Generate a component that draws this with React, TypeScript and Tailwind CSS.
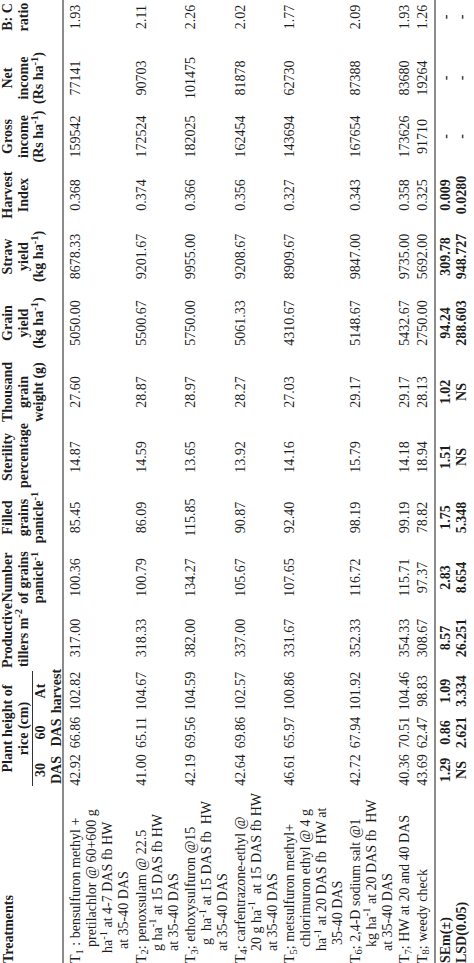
import React from 'react';

// column widths after the treatment column (30 DAS, 60 DAS, harvest, tillers ... B:C)
const W = [
  'w-[38px]',
  'w-[37px]',
  'w-[46px]',
  'w-[60px]',
  'w-[61px]',
  'w-[59px]',
  'w-[62px]',
  'w-[68px]',
  'w-[70px]',
  'w-[63px]',
  'w-[60px]',
  'w-[57px]',
  'w-[60px]',
  'w-[62px]',
];

const Ha = () => (
  <>
    ha<sup>-1</sup>
  </>
);

type Row = {
  t: string;
  sep: string;
  lines: React.ReactNode[];
  vals: string[];
};

const rows: Row[] = [
  {
    t: '1',
    sep: ' : ',
    lines: [
      'bensulfuron methyl +',
      <span className="pl-[16px]">pretilachlor @ 60+600 g</span>,
      <span className="pl-[10px]"><Ha /> at 4-7 DAS fb HW</span>,
      <span className="pl-[14px]">at 35-40 DAS</span>,
    ],
    vals: ['42.92', '66.86', '102.82', '317.00', '100.36', '85.45', '14.87', '27.60', '5050.00', '8678.33', '0.368', '159542', '77141', '1.93'],
  },
  {
    t: '2',
    sep: ': ',
    lines: [
      'penoxsulam @ 22.5',
      <span className="pl-[12px]">g <Ha /> at 15 DAS fb HW</span>,
      <span className="pl-[12px]">at 35-40 DAS</span>,
    ],
    vals: ['41.00', '65.11', '104.67', '318.33', '100.79', '86.09', '14.59', '28.87', '5500.67', '9201.67', '0.374', '172524', '90703', '2.11'],
  },
  {
    t: '3',
    sep: '; ',
    lines: [
      'ethoxysulfuron @15',
      <span className="pl-[18px]">g&nbsp; <Ha /> at 15 DAS fb&nbsp; HW</span>,
      <span className="pl-[12px]">at 35-40 DAS</span>,
    ],
    vals: ['42.19', '69.56', '104.59', '382.00', '134.27', '115.85', '13.65', '28.97', '5750.00', '9955.00', '0.366', '182025', '101475', '2.26'],
  },
  {
    t: '4',
    sep: '; ',
    lines: [
      'carfentrazone-ethyl @',
      <span className="pl-[12px]">20 g <Ha />&nbsp; at 15 DAS fb HW</span>,
      <span className="pl-[12px]">at 35-40 DAS</span>,
    ],
    vals: ['42.64', '69.86', '102.57', '337.00', '105.67', '90.87', '13.92', '28.27', '5061.33', '9208.67', '0.356', '162454', '81878', '2.02'],
  },
  {
    t: '5',
    sep: '; ',
    lines: [
      'metsulfuron methyl+',
      <span className="pl-[16px]">chlorimuron ethyl @ 4 g</span>,
      <span className="pl-[12px]"><Ha /> at 20 DAS fb&nbsp; HW at</span>,
      <span className="pl-[18px]">35-40 DAS</span>,
    ],
    vals: ['46.61', '65.97', '100.86', '331.67', '107.65', '92.40', '14.16', '27.03', '4310.67', '8909.67', '0.327', '143694', '62730', '1.77'],
  },
  {
    t: '6',
    sep: '; ',
    lines: [
      '2,4-D sodium salt @1',
      <span className="pl-[16px]">kg <Ha /> at 20 DAS fb&nbsp; HW</span>,
      <span className="pl-[12px]">at 35-40 DAS</span>,
    ],
    vals: ['42.72', '67.94', '101.92', '352.33', '116.72', '98.19', '15.79', '29.17', '5148.67', '9847.00', '0.343', '167654', '87388', '2.09'],
  },
  {
    t: '7',
    sep: '; ',
    lines: ['HW at 20 and 40 DAS'],
    vals: ['40.36', '70.51', '104.46', '354.33', '115.71', '99.19', '14.18', '29.17', '5432.67', '9735.00', '0.358', '173626', '83680', '1.93'],
  },
  {
    t: '8',
    sep: '; ',
    lines: ['weedy check'],
    vals: ['43.69', '62.47', '98.83', '308.67', '97.37', '78.82', '18.94', '28.13', '2750.00', '5692.00', '0.325', '91710', '19264', '1.26'],
  },
];

const stats = [
  { label: 'SEm(±)', vals: ['1.29', '0.86', '1.09', '8.57', '2.83', '1.75', '1.51', '1.02', '94.24', '309.78', '0.009', '-', '-', '-'] },
  { label: 'LSD(0.05)', vals: ['NS', '2.621', '3.334', '26.251', '8.654', '5.348', 'NS', 'NS', '288.603', '948.727', '0.0280', '-', '-', '-'] },
];

// header cells after the plant height group
const heads: React.ReactNode[] = [
  <>Productive<br />tillers m<sup>-2</sup></>,
  <>Number<br />of grains<br />panicle<sup>-1</sup></>,
  <>Filled<br />grains<br />panicle<sup>-1</sup></>,
  <>Sterility<br />percentage</>,
  <>Thousand<br />grain<br />weight (g)</>,
  <>Grain<br />yield<br />(kg ha<sup>-1</sup>)</>,
  <>Straw<br />yield<br />(kg ha<sup>-1</sup>)</>,
  <>Harvest<br />Index</>,
  <>Gross<br />income<br />(Rs ha<sup>-1</sup>)</>,
  <>Net<br />income<br />(Rs ha<sup>-1</sup>)</>,
  <>B: C<br />ratio</>,
];

export default function App() {
  return (
    <div className="w-[474px] h-[963px] overflow-hidden bg-white">
      {/* table is laid out landscape, then turned to read bottom-to-top */}
      <div className="w-[980px] h-[474px] origin-top-left -rotate-90 translate-y-[963px] bg-white font-['Liberation_Serif','Times_New_Roman',serif] text-[14px] text-[#1d1d1d]">
        {/* Header */}
        <div className="flex items-start h-[64px] border-b-2 border-[#8c8c8c] font-bold leading-[15.5px]">
          <div className="w-[174px] shrink-0 pt-[1px]">Treatments</div>
          <div className="w-[121px] shrink-0 text-center">
            <div>Plant height of</div>
            <div className="mx-[3px] pb-[1px] border-b border-[#333]">rice (cm)</div>
            <div className="flex">
              <div className={`${W[0]} shrink-0`}>30<br />DAS</div>
              <div className={`${W[1]} shrink-0`}>60<br />DAS</div>
              <div className={`${W[2]} shrink-0`}>At<br />harvest</div>
            </div>
          </div>
          {heads.map((h, i) => (
            <div key={i} className={`${W[i + 3]} shrink-0 text-center`}>
              {h}
            </div>
          ))}
        </div>

        {/* Treatment rows */}
        <div className="pt-[4px] mb-[1.5px] leading-[16px]">
          {rows.map((r) => (
            <div key={r.t} className="flex items-start pb-[1.5px]">
              <div className="w-[174px] shrink-0 whitespace-nowrap">
                {r.lines.map((l, j) => (
                  <div key={j}>
                    {j === 0 && (
                      <>
                        T<sub>{r.t}</sub>
                        {r.sep}
                      </>
                    )}
                    {l}
                  </div>
                ))}
              </div>
              {r.vals.map((v, i) => (
                <div key={i} className={`${W[i]} shrink-0 text-center`}>
                  {v}
                </div>
              ))}
            </div>
          ))}
        </div>

        {/* SEm / LSD */}
        <div className="border-t-2 border-[#8c8c8c] pt-[2px] font-bold leading-[16px]">
          {stats.map((s) => (
            <div key={s.label} className="flex items-start">
              <div className="w-[174px] shrink-0">{s.label}</div>
              {s.vals.map((v, i) => (
                <div key={i} className={`${W[i]} shrink-0 text-center`}>
                  {v}
                </div>
              ))}
            </div>
          ))}
        </div>
      </div>
    </div>
  );
}
